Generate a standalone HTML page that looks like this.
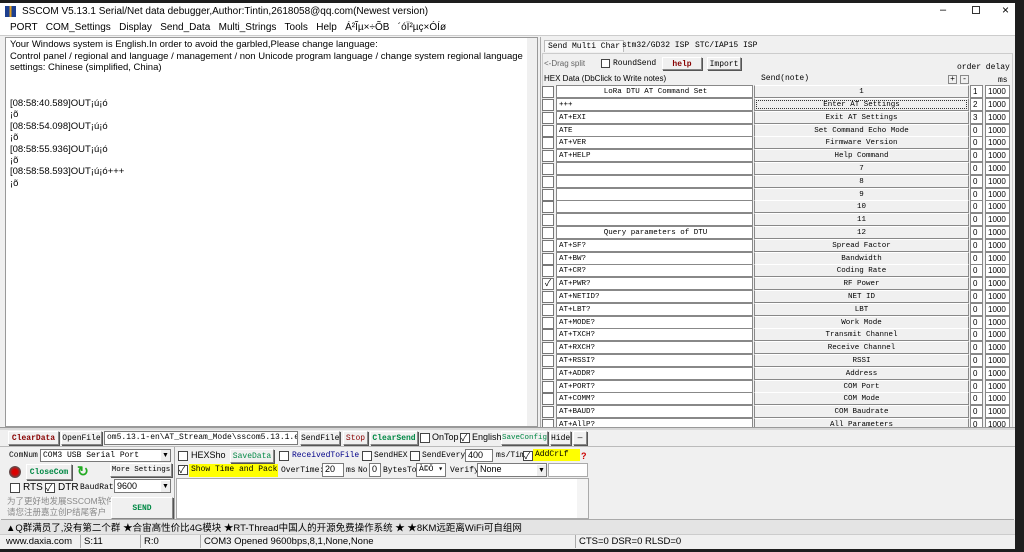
<!DOCTYPE html>
<html><head><meta charset="utf-8"><style>
*{box-sizing:border-box;margin:0;padding:0}
body{width:1024px;height:552px;background:#1e1e1e;position:relative;overflow:hidden;font-family:"Liberation Sans","Noto Sans CJK SC",sans-serif;font-size:11px;color:#000}
.a{position:absolute}
.m{font-family:"Liberation Mono","Noto Sans CJK SC",monospace;font-size:8px;white-space:nowrap}
.cb{position:absolute;width:11px;height:11px;border:1px solid #444;background:#fff}
.btn{position:absolute;background:#f0f0f0;border:1px solid #888;border-top-color:#fff;border-left-color:#fff;box-shadow:1px 1px 0 #555;text-align:center;font-family:"Liberation Mono","Noto Sans CJK SC",monospace;font-size:8px;line-height:13px;white-space:nowrap;overflow:hidden}
.inp{position:absolute;background:#fff;border:1px solid #7a7a7a;font-size:8px;font-family:"Liberation Mono",monospace;white-space:nowrap;overflow:hidden;padding-left:2px}
.row{position:absolute;left:544px;height:13px;width:470px}
.row .c{left:0;top:1px;width:12px;height:12px;border:1px solid #777;background:#fff;position:absolute}
.row .d{left:14px;top:0;width:197px;height:13px;background:#fff;border:1px solid #888;position:absolute;font-family:"Liberation Mono",monospace;font-size:7.5px;line-height:12px;padding-left:2px;white-space:nowrap}
.row .s{left:212px;top:0;width:215px;height:13px;background:#f0f0f0;border:1px solid #888;border-top-color:#fff;position:absolute;font-family:"Liberation Mono",monospace;font-size:7.5px;line-height:12px;text-align:center;white-space:nowrap}
.row .o{left:428px;top:0;width:13px;height:13px;background:#fff;border:1px solid #888;position:absolute;font-size:8px;line-height:11px;padding-left:2px}
.row .y{left:443px;top:0;width:25px;height:13px;background:#fff;border:1px solid #888;position:absolute;font-size:8px;line-height:11px;padding-left:2px}
</style></head><body>
<div class="a" style="left:0;top:3px;width:1015px;height:546px;background:#f0f0f0"></div>
<!-- title -->
<div class="a" style="left:0;top:3px;width:1015px;height:17px;background:#fff"></div>
<div class="a" style="left:5px;top:6px;width:11px;height:11px;background:linear-gradient(90deg,#1d3f8f 40%,#e0a020 40%,#e0a020 60%,#1d3f8f 60%)"></div>
<div class="a" style="left:22px;top:6px;font-size:10px">SSCOM V5.13.1 Serial/Net data debugger,Author:Tintin,2618058@qq.com(Newest version)</div>
<div class="a" style="left:940px;top:4px;font-size:11px">&#8211;</div>
<div class="a" style="left:972px;top:6px;width:8px;height:8px;border:1px solid #333"></div>
<div class="a" style="left:1002px;top:3px;font-size:12px">&#215;</div>
<!-- menu -->
<div class="a" style="left:0;top:20px;width:1015px;height:16px;background:#fff;border-bottom:1px solid #ccc"></div>
<div class="a" style="left:10px;top:22px;font-size:10px;white-space:pre">PORT   COM_Settings   Display   Send_Data   Multi_Strings   Tools   Help   Á²Ĩµ×÷ÕB   ´óÏ²µç×ÓÍø</div>
<!-- left text area -->
<div class="a" style="left:5px;top:37px;width:533px;height:390px;background:#fff;border:1px solid #999"></div>
<div class="a" style="left:527px;top:38px;width:10px;height:388px;background:#f0f0f0"></div>
<div class="a" style="left:10px;top:39px;font-size:9.5px;line-height:11.5px">Your Windows system is English.In order to avoid the garbled,Please change language:<br>Control panel / regional and language / management / non Unicode program language / change system regional language<br>settings: Chinese (simplified, China)</div>
<div class="a" style="left:10px;top:98px;font-size:9.5px;line-height:11.4px">[08:58:40.589]OUT¡ú¡ó<br>¡õ<br>[08:58:54.098]OUT¡ú¡ó<br>¡õ<br>[08:58:55.936]OUT¡ú¡ó<br>¡õ<br>[08:58:58.593]OUT¡ú¡ó+++<br>¡õ</div>
<!-- right panel -->
<div class="a" style="left:540px;top:37px;width:475px;height:391px;background:#f0f0f0;border-left:1px solid #aaa"></div>
<div class="a m" style="left:544px;top:40px;background:#f8f8f8;padding:1px 3px;border:1px solid #bbb;border-bottom:none">Send Multi Char</div>
<div class="a m" style="left:622px;top:41px">stm32/GD32 ISP</div>
<div class="a m" style="left:695px;top:41px">STC/IAP15 ISP</div>
<div class="a" style="left:542px;top:53px;width:471px;height:375px;border:1px solid #ccc"></div>
<div class="a" style="left:544px;top:59px;font-size:8px;color:#666">&lt;-Drag split</div>
<div class="cb" style="left:601px;top:59px;width:9px;height:9px"></div>
<div class="a m" style="left:613px;top:59px">RoundSend</div>
<div class="btn" style="left:662px;top:57px;width:40px;height:13px;color:#800;font-weight:bold">help</div>
<div class="btn" style="left:707px;top:57px;width:34px;height:13px">Import</div>
<div class="a m" style="left:957px;top:63px">order delay</div>
<div class="a" style="left:544px;top:74px;font-size:8px">HEX Data (DbClick to Write notes)</div>
<div class="a m" style="left:761px;top:74px">Send(note)</div>
<div class="a m" style="left:948px;top:75px;border:1px solid #888;width:9px;height:9px;line-height:8px;text-align:center">+</div>
<div class="a m" style="left:960px;top:75px;border:1px solid #888;width:9px;height:9px;line-height:8px;text-align:center">-</div>
<div class="a m" style="left:998px;top:76px">ms</div>
<div class="a" style="left:542px;top:85px;width:472px;height:342px;overflow:hidden">
<div style="position:relative;left:-544px;top:-85px">
<div class="row" style="top:85px"><div class="c"></div><div class="d" style="text-align:center">LoRa DTU AT Command Set</div><div class="s">1</div><div class="o">1</div><div class="y">1000</div></div>
<div class="row" style="top:98px"><div class="c"></div><div class="d">+++</div><div class="s" style="outline:1px dotted #333;outline-offset:-3px">Enter AT Settings</div><div class="o">2</div><div class="y">1000</div></div>
<div class="row" style="top:110.8px"><div class="c"></div><div class="d">AT+EXI</div><div class="s">Exit AT Settings</div><div class="o">3</div><div class="y">1000</div></div>
<div class="row" style="top:123.6px"><div class="c"></div><div class="d">ATE</div><div class="s">Set Command Echo Mode</div><div class="o">0</div><div class="y">1000</div></div>
<div class="row" style="top:136.4px"><div class="c"></div><div class="d">AT+VER</div><div class="s">Firmware Version</div><div class="o">0</div><div class="y">1000</div></div>
<div class="row" style="top:149.2px"><div class="c"></div><div class="d">AT+HELP</div><div class="s">Help Command</div><div class="o">0</div><div class="y">1000</div></div>
<div class="row" style="top:162px"><div class="c"></div><div class="d"></div><div class="s">7</div><div class="o">0</div><div class="y">1000</div></div>
<div class="row" style="top:174.8px"><div class="c"></div><div class="d"></div><div class="s">8</div><div class="o">0</div><div class="y">1000</div></div>
<div class="row" style="top:187.6px"><div class="c"></div><div class="d"></div><div class="s">9</div><div class="o">0</div><div class="y">1000</div></div>
<div class="row" style="top:200.4px"><div class="c"></div><div class="d"></div><div class="s">10</div><div class="o">0</div><div class="y">1000</div></div>
<div class="row" style="top:213.2px"><div class="c"></div><div class="d"></div><div class="s">11</div><div class="o">0</div><div class="y">1000</div></div>
<div class="row" style="top:226px"><div class="c"></div><div class="d" style="text-align:center">Query parameters of DTU</div><div class="s">12</div><div class="o">0</div><div class="y">1000</div></div>
<div class="row" style="top:238.8px"><div class="c"></div><div class="d">AT+SF?</div><div class="s">Spread Factor</div><div class="o">0</div><div class="y">1000</div></div>
<div class="row" style="top:251.6px"><div class="c"></div><div class="d">AT+BW?</div><div class="s">Bandwidth</div><div class="o">0</div><div class="y">1000</div></div>
<div class="row" style="top:264.4px"><div class="c"></div><div class="d">AT+CR?</div><div class="s">Coding Rate</div><div class="o">0</div><div class="y">1000</div></div>
<div class="row" style="top:277.2px"><div class="c" style="font-size:9px;line-height:9px;text-align:center">&#10003;</div><div class="d">AT+PWR?</div><div class="s">RF Power</div><div class="o">0</div><div class="y">1000</div></div>
<div class="row" style="top:290px"><div class="c"></div><div class="d">AT+NETID?</div><div class="s">NET ID</div><div class="o">0</div><div class="y">1000</div></div>
<div class="row" style="top:302.8px"><div class="c"></div><div class="d">AT+LBT?</div><div class="s">LBT</div><div class="o">0</div><div class="y">1000</div></div>
<div class="row" style="top:315.6px"><div class="c"></div><div class="d">AT+MODE?</div><div class="s">Work Mode</div><div class="o">0</div><div class="y">1000</div></div>
<div class="row" style="top:328.4px"><div class="c"></div><div class="d">AT+TXCH?</div><div class="s">Transmit Channel</div><div class="o">0</div><div class="y">1000</div></div>
<div class="row" style="top:341.2px"><div class="c"></div><div class="d">AT+RXCH?</div><div class="s">Receive Channel</div><div class="o">0</div><div class="y">1000</div></div>
<div class="row" style="top:354px"><div class="c"></div><div class="d">AT+RSSI?</div><div class="s">RSSI</div><div class="o">0</div><div class="y">1000</div></div>
<div class="row" style="top:366.8px"><div class="c"></div><div class="d">AT+ADDR?</div><div class="s">Address</div><div class="o">0</div><div class="y">1000</div></div>
<div class="row" style="top:379.6px"><div class="c"></div><div class="d">AT+PORT?</div><div class="s">COM Port</div><div class="o">0</div><div class="y">1000</div></div>
<div class="row" style="top:392.4px"><div class="c"></div><div class="d">AT+COMM?</div><div class="s">COM Mode</div><div class="o">0</div><div class="y">1000</div></div>
<div class="row" style="top:405.2px"><div class="c"></div><div class="d">AT+BAUD?</div><div class="s">COM Baudrate</div><div class="o">0</div><div class="y">1000</div></div>
<div class="row" style="top:418px"><div class="c"></div><div class="d">AT+AllP?</div><div class="s">All Parameters</div><div class="o">0</div><div class="y">1000</div></div>
</div></div>
<div class="a" style="left:0;top:427px;width:1015px;height:3px;background:#d8d8d8;border-top:1px solid #999"></div>
<!-- button row -->
<div class="btn" style="left:8px;top:431px;width:51px;height:14px;color:#800;font-weight:bold">ClearData</div>
<div class="btn" style="left:61px;top:431px;width:41px;height:14px">OpenFile</div>
<div class="inp" style="left:104px;top:431px;width:194px;height:14px;line-height:12px">om5.13.1-en\AT_Stream_Mode\sscom5.13.1.exe</div>
<div class="btn" style="left:300px;top:431px;width:40px;height:14px">SendFile</div>
<div class="btn" style="left:343px;top:431px;width:25px;height:14px;color:#800">Stop</div>
<div class="btn" style="left:370px;top:431px;width:48px;height:14px;color:#084;font-weight:bold">ClearSend</div>
<div class="cb" style="left:420px;top:433px;width:10px;height:10px"></div>
<div class="a" style="left:432px;top:432px;font-size:9px">OnTop</div>
<div class="cb" style="left:460px;top:433px;width:10px;height:10px;font-size:9px;line-height:8px">&#10003;</div>
<div class="a" style="left:472px;top:432px;font-size:9px">English</div>
<div class="btn" style="left:501px;top:431px;width:47px;height:14px;color:#084;font-size:7.5px">SaveConfig</div>
<div class="btn" style="left:550px;top:431px;width:21px;height:14px">Hide</div>
<div class="btn" style="left:573px;top:431px;width:14px;height:14px">&#8212;</div>
<div class="a" style="left:0;top:446px;width:1015px;height:1px;background:#bbb"></div>
<!-- left controls -->
<div class="a m" style="left:9px;top:451px">ComNum</div>
<div class="inp" style="left:40px;top:449px;width:131px;height:13px;line-height:11px">COM3 USB Serial Port</div>
<div class="a" style="left:161px;top:450px;width:9px;height:11px;background:#eee;font-size:7px;text-align:center;line-height:11px">&#9660;</div>
<div class="a" style="left:9px;top:466px;width:12px;height:12px;border-radius:50%;background:radial-gradient(#d00 30%,#555 70%)"></div>
<div class="btn" style="left:26px;top:464px;width:46px;height:16px;color:#084;font-weight:bold;line-height:15px">CloseCom</div>
<div class="a" style="left:77px;top:463px;color:#2a2;font-size:14px;font-weight:bold">&#8635;</div>
<div class="btn" style="left:110px;top:463px;width:62px;height:14px;font-size:7.5px">More Settings</div>
<div class="cb" style="left:10px;top:483px;width:10px;height:10px"></div>
<div class="a" style="left:23px;top:482px;font-size:10px">RTS</div>
<div class="cb" style="left:45px;top:483px;width:10px;height:10px;font-size:9px;line-height:8px">&#10003;</div>
<div class="a" style="left:58px;top:482px;font-size:10px">DTR</div>
<div class="a m" style="left:80px;top:483px">BaudRat</div>
<div class="inp" style="left:114px;top:479px;width:57px;height:14px;line-height:12px;font-family:'Liberation Sans';font-size:9px">9600</div>
<div class="a" style="left:161px;top:481px;width:9px;height:11px;background:#eee;font-size:7px;text-align:center;line-height:11px">&#9660;</div>
<div class="a" style="left:7px;top:496px;font-size:8.5px;line-height:11px;color:#888;white-space:nowrap">为了更好地发展SSCOM软件<br>请您注册嘉立创P结尾客户</div>
<div class="btn" style="left:111px;top:497px;width:62px;height:22px;line-height:21px;color:#084;font-weight:bold">SEND</div>
<div class="a" style="left:174px;top:447px;width:1px;height:72px;background:#aaa"></div>
<!-- middle controls -->
<div class="cb" style="left:178px;top:451px;width:10px;height:10px"></div>
<div class="a" style="left:191px;top:450px;font-size:9px">HEXSho</div>
<div class="btn" style="left:230px;top:449px;width:44px;height:14px;color:#084">SaveData</div>
<div class="cb" style="left:279px;top:451px;width:10px;height:10px"></div>
<div class="a m" style="left:292px;top:451px;color:#008">ReceivedToFile</div>
<div class="cb" style="left:362px;top:451px;width:10px;height:10px"></div>
<div class="a m" style="left:374px;top:451px">SendHEX</div>
<div class="cb" style="left:410px;top:451px;width:10px;height:10px"></div>
<div class="a m" style="left:422px;top:451px">SendEvery:</div>
<div class="inp" style="left:465px;top:449px;width:28px;height:13px;font-family:'Liberation Sans';font-size:9px">400</div>
<div class="a m" style="left:496px;top:451px">ms/Tim</div>
<div class="cb" style="left:523px;top:451px;width:10px;height:10px;font-size:9px;line-height:8px">&#10003;</div>
<div class="a m" style="left:533px;top:449px;width:47px;height:12px;background:#ff0;padding-left:2px;line-height:11px">AddCrLf</div>
<div class="a" style="left:581px;top:451px;color:#c00;font-weight:bold;font-size:9px">?</div>
<div class="cb" style="left:178px;top:465px;width:10px;height:10px;font-size:9px;line-height:8px">&#10003;</div>
<div class="a m" style="left:189px;top:464px;width:89px;height:13px;background:#ff0;line-height:12px;padding-left:2px;overflow:hidden">Show Time and Packe</div>
<div class="a m" style="left:281px;top:466px">OverTime:</div>
<div class="inp" style="left:322px;top:463px;width:22px;height:14px;font-family:'Liberation Sans';font-size:9px">20</div>
<div class="a m" style="left:346px;top:466px">ms</div>
<div class="a m" style="left:358px;top:466px">No</div>
<div class="inp" style="left:369px;top:463px;width:12px;height:14px;font-family:'Liberation Sans';font-size:9px">0</div>
<div class="a m" style="left:383px;top:466px">BytesTo</div>
<div class="inp" style="left:416px;top:463px;width:30px;height:14px">À©Ö ▾</div>
<div class="a m" style="left:450px;top:466px">Verify</div>
<div class="inp" style="left:477px;top:463px;width:70px;height:14px;font-family:'Liberation Sans';font-size:9px">None</div>
<div class="a" style="left:537px;top:465px;width:9px;height:11px;background:#eee;font-size:7px;text-align:center;line-height:11px">&#9660;</div>
<div class="a" style="left:548px;top:463px;width:40px;height:14px;background:#fff;border:1px solid #aaa"></div>
<div class="a" style="left:176px;top:478px;width:413px;height:41px;background:#fff;border:1px solid #aaa"></div>
<div class="a" style="left:577px;top:479px;width:11px;height:39px;background:#f4f4f4"></div>
<div class="a" style="left:1px;top:519px;width:1013px;height:1px;background:#aaa"></div>
<!-- ticker -->
<div class="a" style="left:0;top:520px;width:1015px;height:14px;background:#e4e4e4"></div>
<div class="a" style="left:6px;top:520px;font-size:9.5px;white-space:nowrap">▲Q群满员了,没有第二个群 ★合宙高性价比4G模块 ★RT-Thread中国人的开源免费操作系统 ★ ★8KM远距离WiFi可自组网</div>
<!-- status -->
<div class="a" style="left:0;top:534px;width:1015px;height:15px;background:#f0f0f0;border-top:1px solid #ccc"></div>
<div class="a" style="left:6px;top:536px;font-size:9.5px">www.daxia.com</div>
<div class="a" style="left:80px;top:535px;width:1px;height:13px;background:#aaa"></div>
<div class="a" style="left:84px;top:536px;font-size:9.5px">S:11</div>
<div class="a" style="left:140px;top:535px;width:1px;height:13px;background:#aaa"></div>
<div class="a" style="left:144px;top:536px;font-size:9.5px">R:0</div>
<div class="a" style="left:200px;top:535px;width:1px;height:13px;background:#aaa"></div>
<div class="a" style="left:204px;top:536px;font-size:9.5px">COM3 Opened  9600bps,8,1,None,None</div>
<div class="a" style="left:575px;top:535px;width:1px;height:13px;background:#aaa"></div>
<div class="a" style="left:579px;top:536px;font-size:9.5px">CTS=0 DSR=0 RLSD=0</div>
</body></html>
